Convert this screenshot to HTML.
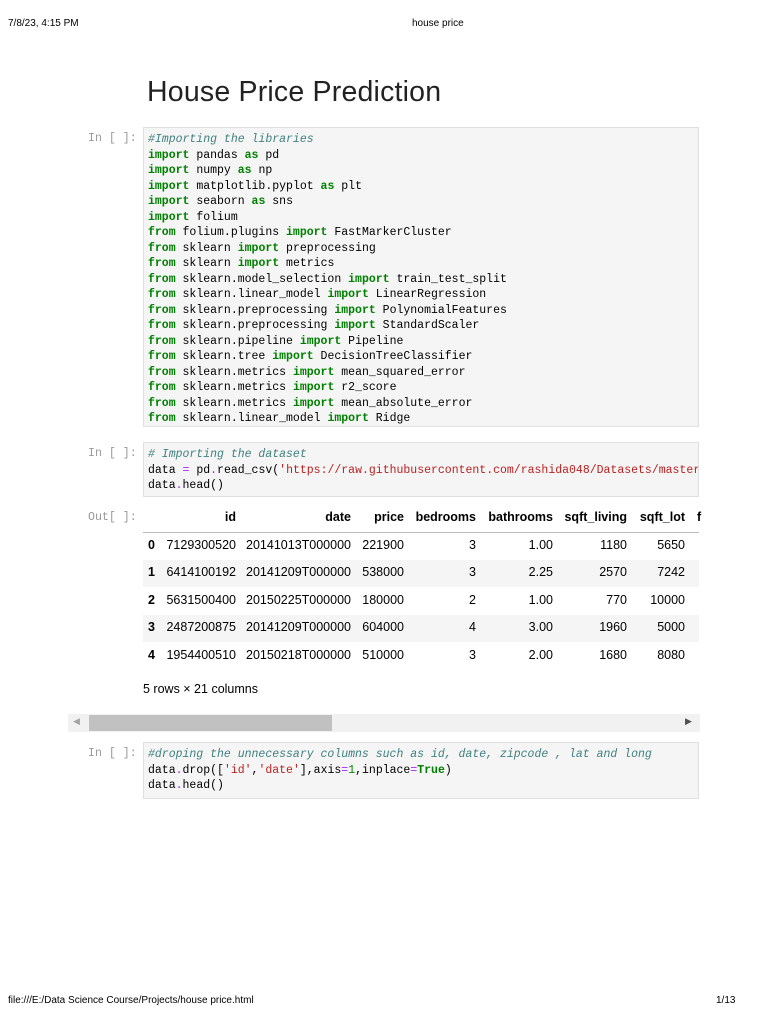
<!DOCTYPE html>
<html><head><meta charset="utf-8"><style>
*{margin:0;padding:0;box-sizing:border-box}
body{width:768px;height:1024px;background:#fff;position:relative;overflow:hidden;font-family:"Liberation Sans",sans-serif;color:#000}
.a{position:absolute;white-space:pre}
.hdr{font-size:10px;top:18px}
.code{position:absolute;left:143px;width:556px;background:#f5f5f5;border:1px solid #e0e0e0;font-family:"Liberation Mono",monospace;font-size:11.5px;line-height:15.5px;padding:4px 0 0 4px;white-space:pre;overflow:hidden;color:#000}
.pr{position:absolute;font-family:"Liberation Mono",monospace;font-size:11.6px;color:#999;white-space:pre}
.k{color:#008000;font-weight:bold}
.c{color:#408080;font-style:italic}
.s{color:#ba2121}
.o{color:#aa22ff}
.n{color:#080}
.t{position:absolute;font-size:12.5px;white-space:pre}
.r{text-align:right}
.b{font-weight:bold}
</style></head><body>
<div class="a hdr" style="left:8px">7/8/23, 4:15 PM</div>
<div class="a hdr" style="left:412px">house price</div>
<div class="a" style="left:147px;top:76px;font-size:28.5px;color:#222;letter-spacing:0.2px">House Price Prediction</div>

<div class="pr" style="left:88px;top:132px">In [ ]:</div>
<div class="code" style="top:127px;height:300px"><span class="c">#Importing the libraries</span>
<span class="k">import</span> pandas <span class="k">as</span> pd
<span class="k">import</span> numpy <span class="k">as</span> np
<span class="k">import</span> matplotlib.pyplot <span class="k">as</span> plt
<span class="k">import</span> seaborn <span class="k">as</span> sns
<span class="k">import</span> folium
<span class="k">from</span> folium.plugins <span class="k">import</span> FastMarkerCluster
<span class="k">from</span> sklearn <span class="k">import</span> preprocessing
<span class="k">from</span> sklearn <span class="k">import</span> metrics
<span class="k">from</span> sklearn.model_selection <span class="k">import</span> train_test_split
<span class="k">from</span> sklearn.linear_model <span class="k">import</span> LinearRegression
<span class="k">from</span> sklearn.preprocessing <span class="k">import</span> PolynomialFeatures
<span class="k">from</span> sklearn.preprocessing <span class="k">import</span> StandardScaler
<span class="k">from</span> sklearn.pipeline <span class="k">import</span> Pipeline
<span class="k">from</span> sklearn.tree <span class="k">import</span> DecisionTreeClassifier
<span class="k">from</span> sklearn.metrics <span class="k">import</span> mean_squared_error
<span class="k">from</span> sklearn.metrics <span class="k">import</span> r2_score
<span class="k">from</span> sklearn.metrics <span class="k">import</span> mean_absolute_error
<span class="k">from</span> sklearn.linear_model <span class="k">import</span> Ridge</div>

<div class="pr" style="left:88px;top:447px">In [ ]:</div>
<div class="code" style="top:442px;height:55px"><span class="c"># Importing the dataset</span>
data <span class="o">=</span> pd<span class="o">.</span>read_csv(<span class="s">'https://raw.githubusercontent.com/rashida048/Datasets/master</span>
data<span class="o">.</span>head()</div>

<div class="pr" style="left:88px;top:511px">Out[ ]:</div>
<div style="position:absolute;left:143px;top:532px;width:556px;height:1px;background:#bbb"></div>
<div style="position:absolute;left:143px;top:560px;width:556px;height:27px;background:#f5f5f5"></div>
<div style="position:absolute;left:143px;top:615px;width:556px;height:27px;background:#f5f5f5"></div>

<div class="t b r" style="right:532px;top:510px">id</div>
<div class="t b r" style="right:417px;top:510px">date</div>
<div class="t b r" style="right:364px;top:510px">price</div>
<div class="t b r" style="right:292px;top:510px">bedrooms</div>
<div class="t b r" style="right:215px;top:510px">bathrooms</div>
<div class="t b r" style="right:141px;top:510px">sqft_living</div>
<div class="t b r" style="right:83px;top:510px">sqft_lot</div>
<div class="t b" style="left:697px;top:510px">f</div>

<div class="t b" style="left:148px;top:538px">0</div><div class="t r" style="right:532px;top:538px">7129300520</div><div class="t r" style="right:417px;top:538px">20141013T000000</div><div class="t r" style="right:364px;top:538px">221900</div><div class="t r" style="right:292px;top:538px">3</div><div class="t r" style="right:215px;top:538px">1.00</div><div class="t r" style="right:141px;top:538px">1180</div><div class="t r" style="right:83px;top:538px">5650</div>
<div class="t b" style="left:148px;top:565px">1</div><div class="t r" style="right:532px;top:565px">6414100192</div><div class="t r" style="right:417px;top:565px">20141209T000000</div><div class="t r" style="right:364px;top:565px">538000</div><div class="t r" style="right:292px;top:565px">3</div><div class="t r" style="right:215px;top:565px">2.25</div><div class="t r" style="right:141px;top:565px">2570</div><div class="t r" style="right:83px;top:565px">7242</div>
<div class="t b" style="left:148px;top:593px">2</div><div class="t r" style="right:532px;top:593px">5631500400</div><div class="t r" style="right:417px;top:593px">20150225T000000</div><div class="t r" style="right:364px;top:593px">180000</div><div class="t r" style="right:292px;top:593px">2</div><div class="t r" style="right:215px;top:593px">1.00</div><div class="t r" style="right:141px;top:593px">770</div><div class="t r" style="right:83px;top:593px">10000</div>
<div class="t b" style="left:148px;top:620px">3</div><div class="t r" style="right:532px;top:620px">2487200875</div><div class="t r" style="right:417px;top:620px">20141209T000000</div><div class="t r" style="right:364px;top:620px">604000</div><div class="t r" style="right:292px;top:620px">4</div><div class="t r" style="right:215px;top:620px">3.00</div><div class="t r" style="right:141px;top:620px">1960</div><div class="t r" style="right:83px;top:620px">5000</div>
<div class="t b" style="left:148px;top:648px">4</div><div class="t r" style="right:532px;top:648px">1954400510</div><div class="t r" style="right:417px;top:648px">20150218T000000</div><div class="t r" style="right:364px;top:648px">510000</div><div class="t r" style="right:292px;top:648px">3</div><div class="t r" style="right:215px;top:648px">2.00</div><div class="t r" style="right:141px;top:648px">1680</div><div class="t r" style="right:83px;top:648px">8080</div>

<div class="t" style="left:143px;top:682px">5 rows × 21 columns</div>

<div style="position:absolute;left:68px;top:714px;width:632px;height:18px;background:#f1f1f1"></div>
<div style="position:absolute;left:89px;top:715px;width:243px;height:16px;background:#c1c1c1"></div>
<div class="a" style="left:73px;top:716px;font-size:9px;color:#a3a3a3">◀</div>
<div class="a" style="left:685px;top:716px;font-size:9px;color:#505050">▶</div>

<div class="pr" style="left:88px;top:747px">In [ ]:</div>
<div class="code" style="top:742px;height:57px"><span class="c">#droping the unnecessary columns such as id, date, zipcode , lat and long</span>
data<span class="o">.</span>drop([<span class="s">'id'</span>,<span class="s">'date'</span>],axis<span class="o">=</span><span class="n">1</span>,inplace<span class="o">=</span><span class="k">True</span>)
data<span class="o">.</span>head()</div>

<div class="a hdr" style="left:8px;top:995px">file:///E:/Data Science Course/Projects/house price.html</div>
<div class="a hdr" style="left:716px;top:995px">1/13</div>
</body></html>
